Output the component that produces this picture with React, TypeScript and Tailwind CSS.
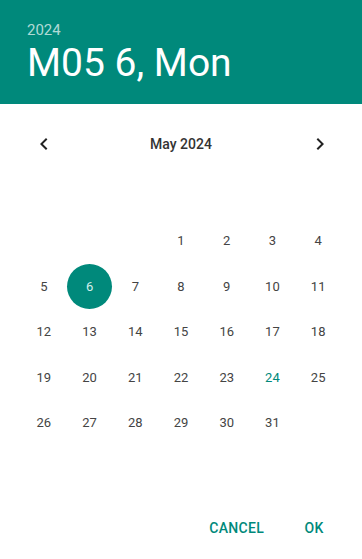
const days: (number | null)[] = [
  null, null, null, 1, 2, 3, 4,
  5, 6, 7, 8, 9, 10, 11,
  12, 13, 14, 15, 16, 17, 18,
  19, 20, 21, 22, 23, 24, 25,
  26, 27, 28, 29, 30, 31, null,
];

function Chevron({ dir }: { dir: 'left' | 'right' }) {
  return (
    <svg width="24" height="24" viewBox="0 0 24 24" fill="#222">
      {dir === 'left' ? (
        <path d="M15.41 7.41L14 6l-6 6 6 6 1.41-1.41L10.83 12z" />
      ) : (
        <path d="M8.59 16.59L10 18l6-6-6-6-1.41 1.41L13.17 12z" />
      )}
    </svg>
  );
}

export default function App() {
  return (
    <div className="w-[362px] h-[559px] bg-white flex flex-col font-['Roboto',sans-serif] overflow-hidden">
      {/* Header */}
      <div className="h-[104px] bg-[#00897b] px-[27px] pt-[20px]">
        <div className="text-[15px] leading-[20px] text-white/70">2024</div>
        <div className="text-[39px] leading-[44px] text-white mt-[1px]">M05 6, Mon</div>
      </div>

      {/* Month nav */}
      <div className="h-[80px] flex items-center justify-between px-[21px]">
        <button className="w-[46px] h-[46px] flex items-center justify-center">
          <Chevron dir="left" />
        </button>
        <div className="text-[14px] font-medium text-[#333]">May 2024</div>
        <button className="w-[46px] h-[46px] flex items-center justify-center translate-x-[2px]">
          <Chevron dir="right" />
        </button>
      </div>

      {/* Days grid */}
      <div className="mt-[34px] px-[21px] grid grid-cols-7">
        {days.map((d, i) => (
          <div key={i} className="h-[45.5px] flex items-center justify-center">
            {d === 6 ? (
              <div className="w-[45px] h-[45px] rounded-full bg-[#00897b] flex items-center justify-center text-[13px] text-[#d5efec]">
                6
              </div>
            ) : d === 24 ? (
              <span className="text-[13px] text-[#00897b]">24</span>
            ) : d ? (
              <span className="text-[13px] text-[#444]">{d}</span>
            ) : null}
          </div>
        ))}
      </div>

      {/* Actions */}
      <div className="mt-auto mb-[13px] flex justify-end items-center pr-[16px] h-[36px]">
        <button className="h-[36px] px-[8px] min-w-[64px] text-[14px] font-medium tracking-[0.3px] text-[#00897b]">
          CANCEL
        </button>
        <button className="h-[36px] ml-[10px] px-[8px] min-w-[64px] text-[14px] font-medium tracking-[0.3px] text-[#00897b]">
          OK
        </button>
      </div>
    </div>
  );
}
